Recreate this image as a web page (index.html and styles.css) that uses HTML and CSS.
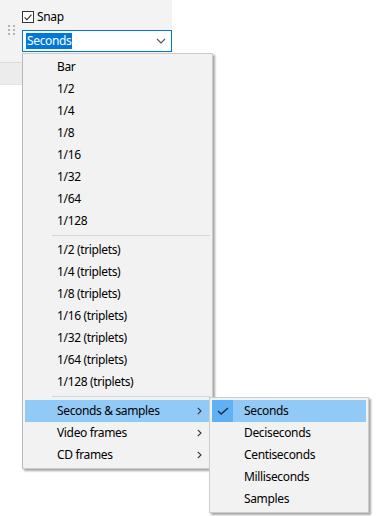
FILE: index.html
```html
<!DOCTYPE html>
<html>
<head>
<meta charset="utf-8">
<link rel="stylesheet" href="styles.css">
</head>
<body>
<div class="panel">
  <div class="grip">
    <span class="dot"></span><span class="dot"></span>
    <span class="dot"></span><span class="dot"></span>
    <span class="dot"></span><span class="dot"></span>
  </div>
  <div class="controls">
    <label class="snap-row">
      <span class="checkbox"><svg width="11" height="11" viewBox="0 0 11 11"><path d="M1.8 5.3 L4.3 8 L9.3 2.3" fill="none" stroke="#222" stroke-width="1.2"/></svg></span>
      <span class="snap-label">Snap</span>
    </label>
    <div class="select">
      <span class="sel-text">Seconds</span>
      <svg class="sel-chev" width="10" height="6" viewBox="0 0 10 6"><path d="M1 1 L5 5 L9 1" fill="none" stroke="#555" stroke-width="1.1"/></svg>
    </div>
  </div>
</div>
<div class="strip"></div>

<div class="menu">
  <div class="item">Bar</div>
  <div class="item">1/2</div>
  <div class="item">1/4</div>
  <div class="item">1/8</div>
  <div class="item">1/16</div>
  <div class="item">1/32</div>
  <div class="item">1/64</div>
  <div class="item">1/128</div>
  <div class="sep"></div>
  <div class="item">1/2 (triplets)</div>
  <div class="item">1/4 (triplets)</div>
  <div class="item">1/8 (triplets)</div>
  <div class="item">1/16 (triplets)</div>
  <div class="item">1/32 (triplets)</div>
  <div class="item">1/64 (triplets)</div>
  <div class="item">1/128 (triplets)</div>
  <div class="sep"></div>
  <div class="item sub active"><span>Seconds &amp; samples</span><svg class="arrow" width="5" height="8" viewBox="0 0 5 8"><path d="M0.8 0.8 L4 4 L0.8 7.2" fill="none" stroke="#333" stroke-width="1.1"/></svg></div>
  <div class="item sub"><span>Video frames</span><svg class="arrow" width="5" height="8" viewBox="0 0 5 8"><path d="M0.8 0.8 L4 4 L0.8 7.2" fill="none" stroke="#333" stroke-width="1.1"/></svg></div>
  <div class="item sub"><span>CD frames</span><svg class="arrow" width="5" height="8" viewBox="0 0 5 8"><path d="M0.8 0.8 L4 4 L0.8 7.2" fill="none" stroke="#333" stroke-width="1.1"/></svg></div>
</div>

<div class="submenu">
  <div class="sitem active"><span class="check"><svg width="12" height="8" viewBox="0 0 12 8"><path d="M1 4 L4.2 7 L11 1" fill="none" stroke="#1c2b3a" stroke-width="1.4"/></svg></span><span class="stext">Seconds</span></div>
  <div class="sitem"><span class="check"></span><span class="stext">Deciseconds</span></div>
  <div class="sitem"><span class="check"></span><span class="stext">Centiseconds</span></div>
  <div class="sitem"><span class="check"></span><span class="stext">Milliseconds</span></div>
  <div class="sitem"><span class="check"></span><span class="stext">Samples</span></div>
</div>
</body>
</html>
```

FILE: styles.css
```css
* { box-sizing: border-box; }
html, body {
  margin: 0;
  padding: 0;
  background: #ffffff;
  font-family: "Noto Sans", "Open Sans", sans-serif;
  font-size: 12px;
  letter-spacing: -0.35px;
  color: #000;
}
.panel {
  width: 172px;
  height: 62px;
  background: #f3f3f3;
  display: grid;
  grid-template-columns: 22px 1fr;
}
.grip {
  display: grid;
  grid-template-columns: 2px 2px;
  column-gap: 3px;
  row-gap: 2px;
  align-content: start;
  padding: 25px 0 0 8px;
}
.dot {
  width: 2px;
  height: 2px;
  background: #b4b4b4;
}
.controls {
  display: flex;
  flex-direction: column;
  padding-top: 9px;
}
.snap-row {
  display: flex;
  align-items: center;
  height: 16px;
  gap: 3px;
}
.checkbox {
  width: 12px;
  height: 12px;
  border: 1px solid #333;
  background: #fff;
  display: flex;
}
.checkbox svg { display: block; }
.snap-label { line-height: 16px; }
.select {
  margin-top: 5px;
  width: 150px;
  height: 22px;
  border: 1px solid #0078d7;
  background: #fff;
  display: flex;
  align-items: center;
  justify-content: space-between;
  padding: 0 5px 0 3px;
}
.sel-text {
  background: #0078d7;
  color: #fff;
  line-height: 16px;
  padding: 0 1px;
}
.sel-chev { display: block; }
.strip {
  width: 172px;
  height: 23px;
  background: #ececec;
  border-top: 1px solid #dadada;
  border-bottom: 1px solid #e4e4e4;
}

.menu {
  position: absolute;
  left: 22px;
  top: 53px;
  width: 191px;
  background: #f2f2f2;
  border: 1px solid #cccccc;
  border-left-color: #b8b8b8;
  padding: 2px;
  box-shadow: 2px 2px 2px rgba(0,0,0,0.35);
}
.item {
  height: 22px;
  line-height: 22px;
  padding-left: 32px;
  padding-right: 8px;
  white-space: nowrap;
}
.item.sub {
  display: flex;
  align-items: center;
  justify-content: space-between;
}
.item.active { background: #91c9f7; }
.arrow { display: block; }
.sep {
  height: 7px;
  margin-left: 27px;
  display: flex;
  align-items: center;
}
.sep::before {
  content: "";
  display: block;
  width: 100%;
  height: 1px;
  background: #d5d5d5;
}

.submenu {
  position: absolute;
  left: 209px;
  top: 397px;
  width: 160px;
  background: #f2f2f2;
  border: 1px solid #cccccc;
  padding: 2px;
  box-shadow: 2px 2px 2px rgba(0,0,0,0.35);
}
.sitem {
  height: 22px;
  display: flex;
  align-items: center;
  white-space: nowrap;
}
.sitem.active { background: #91c9f7; }
.check {
  width: 21px;
  height: 22px;
  display: flex;
  align-items: center;
  justify-content: center;
}
.sitem.active .check { background: #5fb1f6; }
.stext {
  padding-left: 11px;
  line-height: 22px;
}
```
